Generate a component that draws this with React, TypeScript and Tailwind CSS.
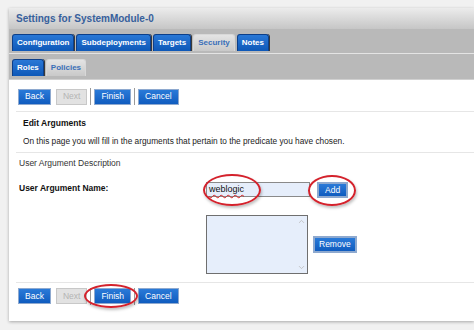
import { ChevronDown, ChevronUp } from "lucide-react";

const font = "font-['Liberation_Sans',Arial,sans-serif]";

function Tab({ label, active }: { label: string; active?: boolean }) {
  return (
    <div
      className={
        active
          ? "flex h-[17px] items-center rounded-t-[3px] border border-b-0 border-[#d8d8d8] bg-gradient-to-b from-[#e4e4e4] to-[#c9c9c9] px-[4px] text-[8px] font-bold text-[#3a6fb8]"
          : "flex h-[17px] items-center rounded-t-[3px] border border-b-0 border-[#0c3f8a] bg-gradient-to-b from-[#2a78d6] to-[#0d58b8] px-[4px] text-[8px] font-bold text-white shadow-[1px_0_0_#3a3a3a]"
      }
    >
      {label}
    </div>
  );
}

function Btn({ label, disabled }: { label: string; disabled?: boolean }) {
  return (
    <div
      className={
        disabled
          ? "flex h-[16px] items-center border border-[#c8c8c8] bg-[#e2e2e2] px-[6px] text-[8.5px] text-[#b4b4b4]"
          : "flex h-[16px] items-center border border-[#8ea9cf] bg-gradient-to-b from-[#2a7ad8] to-[#0f5cbf] px-[6px] text-[8.5px] text-white"
      }
    >
      {label}
    </div>
  );
}

function Sep() {
  return <div className="mx-[3px] h-[17px] w-[1px] bg-[#9a9a9a]" />;
}

function ButtonRow({ ring }: { ring?: boolean }) {
  return (
    <div className="flex items-center pl-[2px]">
      <Btn label="Back" />
      <div className="w-[5px]" />
      <Btn label="Next" disabled />
      <Sep />
      <div className="relative">
        <Btn label="Finish" />
        {ring && (
          <div className="absolute left-[-10px] top-[-4px] h-[24px] w-[54px] rounded-[50%] border-2 border-[#d4222c] shadow-[1px_2px_3px_rgba(0,0,0,0.25)]" />
        )}
      </div>
      <Sep />
      <Btn label="Cancel" />
    </div>
  );
}

export default function App() {
  return (
    <div className={`${font} h-[330px] w-[474px] overflow-hidden bg-[#f1f1f1] pl-[9px] pt-[8px]`}>
      <div className="h-[313px] bg-white shadow-[0_1px_3px_rgba(0,0,0,0.3)]">
        <div className="flex h-[21px] items-center bg-gradient-to-b from-[#ececec] to-[#c6c6c6] pl-[7px] text-[10px] font-bold text-[#37609c]">
          Settings for SystemModule-0
        </div>
        <div className="flex h-[25px] items-end gap-[2px] border-b border-[#e4e4e4] bg-[#b9b9b9] pb-[2px] pl-[3px]">
          <Tab label="Configuration" />
          <Tab label="Subdeployments" />
          <Tab label="Targets" />
          <Tab label="Security" active />
          <Tab label="Notes" />
        </div>
        <div className="flex h-[26px] items-end gap-[2px] border-b border-[#d0d0d0] bg-[#b9b9b9] pb-[3px] pl-[3px]">
          <Tab label="Roles" />
          <Tab label="Policies" active />
        </div>

        <div className="pl-[7px]">
          <div className="pt-[8px]">
            <ButtonRow />
          </div>
          <div className="mt-[6px] border-t border-[#e6e6e6] pl-[7px] pt-[5px] text-[8.5px] font-bold text-[#111]">
            Edit Arguments
          </div>
          <div className="mt-[5px] pl-[7px] text-[8.3px] text-[#222]">
            On this page you will fill in the arguments that pertain to the predicate you have chosen.
          </div>
          <div className="mt-[5px] border-t border-[#e6e6e6] pl-[3px] pt-[4px] text-[8.5px] text-[#333]">
            User Argument Description
          </div>

          <div className="mt-[12px] flex pl-[3px]">
            <div className="w-[187px] text-[8.5px] font-bold text-[#111]">User Argument Name:</div>
            <div className="flex flex-col">
              <div className="flex items-center">
                <div className="relative">
                  <div className="flex h-[15px] w-[104px] items-center border border-[#8a8a8a] bg-[#e6eefb] pl-[2px] text-[9px] text-[#111]">
                    <span className="underline decoration-[#d42020] decoration-wavy decoration-1 underline-offset-2">
                      weblogic
                    </span>
                  </div>
                  <div className="absolute left-[-3px] top-[-8px] h-[32px] w-[58px] rounded-[50%] border-2 border-[#d4222c] shadow-[1px_2px_3px_rgba(0,0,0,0.25)]" />
                </div>
                <div className="relative ml-[7px]">
                  <div className="flex h-[16px] items-center border-2 border-[#8ea9cf] bg-gradient-to-b from-[#2a7ad8] to-[#0f5cbf] px-[6px] text-[8.5px] text-white">
                    Add
                  </div>
                  <div className="absolute left-[-9px] top-[-7px] h-[31px] w-[48px] rounded-[50%] border-2 border-[#d4222c] shadow-[1px_2px_3px_rgba(0,0,0,0.25)]" />
                </div>
              </div>
              <div className="mt-[17px] flex items-center">
                <div className="flex h-[59px] w-[102px] justify-end border border-[#6f6f6f] bg-[#e6eefb]">
                  <div className="flex w-[12px] flex-col items-center justify-between py-[1px] text-[#b8b8b8]">
                    <ChevronUp size={9} strokeWidth={2} />
                    <ChevronDown size={9} strokeWidth={2} />
                  </div>
                </div>
                <div className="ml-[5px] flex h-[17px] items-center border-2 border-[#8ea9cf] bg-gradient-to-b from-[#2a7ad8] to-[#0f5cbf] px-[4px] text-[8.5px] text-white">
                  Remove
                </div>
              </div>
            </div>
          </div>

          <div className="mt-[8px] border-t border-[#e6e6e6] pt-[5px]">
            <ButtonRow ring />
          </div>
        </div>
      </div>
    </div>
  );
}
